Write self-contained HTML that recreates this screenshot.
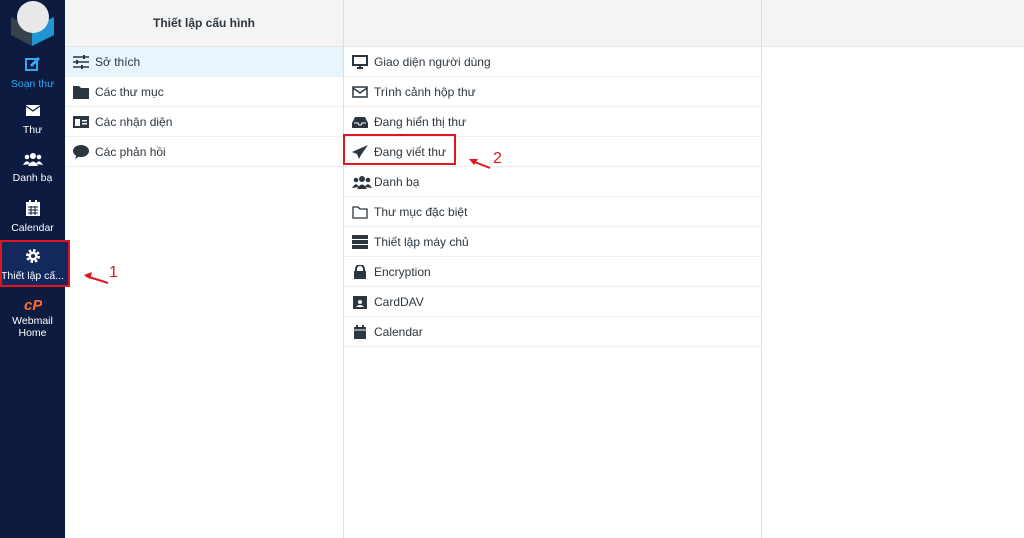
<!DOCTYPE html><html><head><meta charset="utf-8"><style>
*{margin:0;padding:0;box-sizing:border-box}
body{width:1024px;height:538px;overflow:hidden;font-family:"Liberation Sans",sans-serif;background:#fff;position:relative;font-size:12px;color:#2c363f}
#side{position:absolute;left:0;top:0;width:65px;height:538px;background:#0d1b40}
.ni{position:absolute;left:0;width:65px;text-align:center;color:#fff;font-size:10.5px;line-height:12px}
.ni svg{display:block;margin:0 auto 6px}
.col{position:absolute;top:0;height:538px;border-right:1px solid #ddd}
.hd{height:47px;background:#f4f4f4;border-bottom:1px solid #e6e6e6;font-weight:bold;text-align:center;line-height:46px;font-size:12px}
.r{height:30px;border-bottom:1px solid #eee;line-height:30px;padding-left:30px;position:relative;font-size:12px}
.r svg{position:absolute;left:8px;top:8px}
.sel{background:#e9f5fd}
.box{position:absolute;border:2px solid #e0161c}
.red{position:absolute;color:#e0161c;font-size:16px}
</style></head><body>
<div id="side">
<svg style="position:absolute;left:10px;top:0" width="45" height="46" viewBox="0 0 45 46"><path d="M1 17 L22 28 L44 17 L44 35 L22 46 L1 35Z" fill="#37424a"/><path d="M22 28 L44 17 L44 35 L22 46Z" fill="#2196d3"/><circle cx="23" cy="17" r="16" fill="#e8e8e8"/></svg>
<div class="ni" style="top:56px;color:#37a6ee"><svg width="16" height="16" viewBox="0 0 16 16"><rect x="1" y="3" width="11" height="11" fill="none" stroke="#37a6ee" stroke-width="2"/><path d="M6 10 L14 2" stroke="#37a6ee" stroke-width="3"/></svg>Soạn thư</div>
<div class="ni" style="top:104px"><svg width="16" height="14" viewBox="0 0 16 14"><rect x="1" y="1" width="14" height="11" fill="#fff"/><path d="M1 2 L8 7 L15 2" stroke="#0d1b40" fill="none" stroke-width="1.3"/></svg>Thư</div>
<div class="ni" style="top:152px"><svg width="20" height="14" viewBox="0 0 20 14"><circle cx="10" cy="4" r="3" fill="#fff"/><circle cx="4" cy="5" r="2.3" fill="#fff"/><circle cx="16" cy="5" r="2.3" fill="#fff"/><path d="M5 14 Q10 5 15 14Z M0 13 Q4 6 7 12Z M13 12 Q16 6 20 13Z" fill="#fff"/></svg>Danh bạ</div>
<div class="ni" style="top:200px"><svg width="14" height="16" viewBox="0 0 14 16"><rect x="0" y="2" width="14" height="14" fill="#fff"/><rect x="3" y="0" width="2" height="4" fill="#fff"/><rect x="9" y="0" width="2" height="4" fill="#fff"/><path d="M2 7h10M2 10h10M2 13h10M5 6v9M9 6v9" stroke="#0d1b40"/></svg>Calendar</div>
<div style="position:absolute;left:2px;top:242px;width:66px;height:44px;background:#13295e"></div>
<div class="ni" style="top:248px"><svg width="16" height="16" viewBox="0 0 16 16"><circle cx="8" cy="8" r="5.5" fill="none" stroke="#fff" stroke-width="3" stroke-dasharray="2.5 1.8"/><circle cx="8" cy="8" r="4.5" fill="#fff"/><circle cx="8" cy="8" r="2" fill="#13295e"/></svg>Thiết lập cấ...</div>
<div class="ni" style="top:297px"><svg width="18" height="14" viewBox="0 0 18 14" style="margin-bottom:4px"><text x="0" y="13" font-size="15" font-weight="bold" font-style="italic" fill="#ff6c2c" font-family="Liberation Sans">cP</text></svg>Webmail<br>Home</div>
</div>
<div class="box" style="left:0;top:240px;width:70px;height:47px"></div>
<svg style="position:absolute;left:80px;top:268px" width="35" height="20"><path d="M28 15 L6 8" stroke="#e0161c" stroke-width="2"/><path d="M4 7 L12 4 L10 11Z" fill="#e0161c"/></svg>
<div class="red" style="left:109px;top:264px">1</div>

<div class="col" style="left:65px;width:279px">
<div class="hd">Thiết lập cấu hình</div>
<div class="r sel"><svg width="16" height="14" viewBox="0 0 16 14"><path d="M0 2h16M0 7h16M0 12h16" stroke="#2c363f" stroke-width="1.5"/><path d="M11 0v4M4 5v4M9 10v4" stroke="#2c363f" stroke-width="2"/></svg>Sở thích</div>
<div class="r"><svg width="16" height="14" viewBox="0 0 16 14"><path d="M0 1h6l2 2h8v11H0Z" fill="#2c363f"/></svg>Các thư mục</div>
<div class="r"><svg width="16" height="14" viewBox="0 0 16 14"><rect x="0" y="1" width="16" height="12" fill="#2c363f"/><rect x="2" y="4" width="5" height="7" fill="#fff"/><rect x="9" y="5" width="5" height="1.5" fill="#fff"/><rect x="9" y="8" width="5" height="1.5" fill="#fff"/></svg>Các nhận diện</div>
<div class="r"><svg width="16" height="14" viewBox="0 0 16 14"><ellipse cx="8" cy="6" rx="8" ry="6" fill="#2c363f"/><path d="M2 14 L4 9 L7 11Z" fill="#2c363f"/></svg>Các phản hồi</div>
</div>

<div class="col" style="left:344px;width:418px">
<div class="hd"></div>
<div class="r"><svg width="16" height="14" viewBox="0 0 16 14"><rect x="1" y="1" width="14" height="9" fill="none" stroke="#2c363f" stroke-width="2"/><path d="M5 13h6M8 10v3" stroke="#2c363f" stroke-width="2"/></svg>Giao diện người dùng</div>
<div class="r"><svg width="16" height="14" viewBox="0 0 16 14"><rect x="1" y="2" width="14" height="10" fill="none" stroke="#2c363f" stroke-width="1.5"/><path d="M1 3 L8 8 L15 3" stroke="#2c363f" fill="none" stroke-width="1.5"/></svg>Trình cảnh hộp thư</div>
<div class="r"><svg width="16" height="14" viewBox="0 0 16 14"><path d="M3 2h10l3 6v5H0V8Z" fill="#2c363f"/><path d="M2 8h4l1 2h2l1-2h4" stroke="#fff" fill="none"/></svg>Đang hiển thị thư</div>
<div class="r"><svg width="16" height="14" viewBox="0 0 16 14"><path d="M16 0 L0 7 L5 9 L7 14 L9 10Z" fill="#2c363f"/></svg>Đang viết thư</div>
<div class="r"><svg width="20" height="14" viewBox="0 0 20 14"><circle cx="10" cy="4" r="3" fill="#2c363f"/><circle cx="4" cy="5" r="2.3" fill="#2c363f"/><circle cx="16" cy="5" r="2.3" fill="#2c363f"/><path d="M5 14 Q10 5 15 14Z M0 13 Q4 6 7 12Z M13 12 Q16 6 20 13Z" fill="#2c363f"/></svg>Danh bạ</div>
<div class="r"><svg width="16" height="14" viewBox="0 0 16 14"><path d="M1 2h5l2 2h7v9H1Z" fill="none" stroke="#2c363f" stroke-width="1.3"/></svg>Thư mục đặc biệt</div>
<div class="r"><svg width="16" height="14" viewBox="0 0 16 14"><rect x="0" y="0" width="16" height="4" fill="#2c363f"/><rect x="0" y="5" width="16" height="4" fill="#2c363f"/><rect x="0" y="10" width="16" height="4" fill="#2c363f"/></svg>Thiết lập máy chủ</div>
<div class="r"><svg width="16" height="14" viewBox="0 0 16 14"><path d="M4 6V4a4 4 0 0 1 8 0v2" stroke="#2c363f" stroke-width="2" fill="none"/><rect x="2" y="6" width="12" height="8" fill="#2c363f"/></svg>Encryption</div>
<div class="r"><svg width="16" height="14" viewBox="0 0 16 14"><rect x="1" y="1" width="14" height="13" fill="#2c363f"/><circle cx="8" cy="7" r="2" fill="#fff"/><path d="M4 12 Q8 8 12 12Z" fill="#fff"/></svg>CardDAV</div>
<div class="r"><svg width="16" height="14" viewBox="0 0 16 14"><rect x="2" y="2" width="12" height="12" fill="#2c363f"/><rect x="4" y="0" width="2" height="3" fill="#2c363f"/><rect x="10" y="0" width="2" height="3" fill="#2c363f"/><path d="M2 5h12" stroke="#fff"/></svg>Calendar</div>
</div>
<div class="box" style="left:343px;top:134px;width:113px;height:31px"></div>
<svg style="position:absolute;left:466px;top:154px" width="30" height="20"><path d="M24 14 L6 7" stroke="#e0161c" stroke-width="2"/><path d="M3 5 L12 5 L8 11Z" fill="#e0161c"/></svg>
<div class="red" style="left:493px;top:150px">2</div>
<div class="col" style="left:762px;width:262px;border:none"><div class="hd"></div></div>
</body></html>
